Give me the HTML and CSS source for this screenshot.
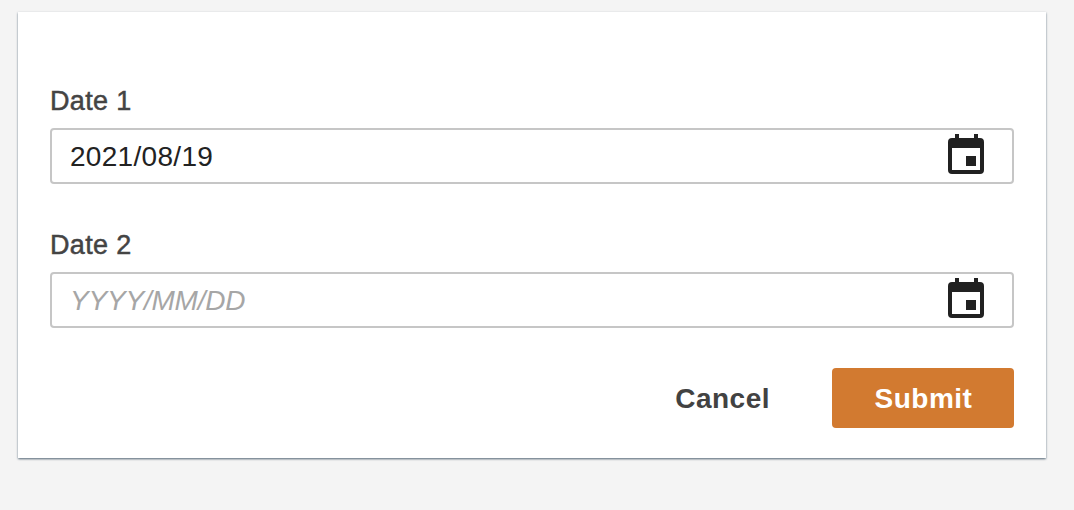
FILE: index.html
```html
<!DOCTYPE html>
<html lang="en">
  <head>
    <meta charset="UTF-8" />
    <title>Date form</title>
    <link rel="stylesheet" href="styles.css">
  </head>

  <body>
    <form class="card">
      <div class="form-group">
        <label for="date1">Date 1</label>
        <div class="date-input">
          <input type="text" id="date1" value="2021/08/19" placeholder="YYYY/MM/DD" />
          <svg class="cal-icon" viewBox="0 0 36 40" aria-hidden="true">
            <path fill="#212121" fill-rule="evenodd" d="M7 0h4v4h15V0h4v4h2a4 4 0 0 1 4 4v28a4 4 0 0 1-4 4H4a4 4 0 0 1-4-4V8a4 4 0 0 1 4-4h3zM4 14v22h28V14z" />
            <rect x="18" y="22" width="10" height="10" fill="#212121" />
          </svg>
        </div>
      </div>
      <div class="form-group">
        <label for="date2">Date 2</label>
        <div class="date-input">
          <input type="text" id="date2" placeholder="YYYY/MM/DD" />
          <svg class="cal-icon" viewBox="0 0 36 40" aria-hidden="true">
            <path fill="#212121" fill-rule="evenodd" d="M7 0h4v4h15V0h4v4h2a4 4 0 0 1 4 4v28a4 4 0 0 1-4 4H4a4 4 0 0 1-4-4V8a4 4 0 0 1 4-4h3zM4 14v22h28V14z" />
            <rect x="18" y="22" width="10" height="10" fill="#212121" />
          </svg>
        </div>
      </div>
      <div class="actions">
        <button type="button" class="btn-cancel">Cancel</button>
        <button type="button" class="btn-submit">Submit</button>
      </div>
    </form>
  </body>
</html>
```

FILE: styles.css
```css
html,
body {
  height: 100%;
}

body {
  margin: 0;
  box-sizing: border-box;
  padding: 12px 28px 0 18px;
  background-color: #f4f4f4;
  font-family: "Liberation Sans", Arial, sans-serif;
}

.card {
  height: 446px;
  box-sizing: border-box;
  padding: 72px 32px 0;
  background-color: #fff;
  box-shadow: 0 1px 2px rgba(60, 85, 105, 0.75), 0 2px 2px -1px rgba(0, 0, 0, 0.2);
}

.form-group {
  margin-bottom: 44px;
}

label {
  display: block;
  margin-bottom: 10px;
  height: 34px;
  line-height: 34px;
  font-size: 27px;
  letter-spacing: 0.35px;
  color: #444;
  -webkit-text-stroke: 0.5px #444;
}

.date-input {
  display: flex;
  align-items: center;
  height: 56px;
  box-sizing: border-box;
  padding: 0 28px 0 18px;
  border: 2px solid #c6c6c6;
  border-radius: 4px;
}

input {
  flex: 1;
  min-width: 0;
  padding: 2px 0 0;
  border: none;
  outline: none;
  font-family: inherit;
  font-size: 28px;
  letter-spacing: 0.3px;
  color: #222;
}

input::placeholder {
  font-style: italic;
  letter-spacing: -0.2px;
  color: #a6a6a6;
  opacity: 1;
}

.cal-icon {
  width: 36px;
  height: 40px;
  margin-top: -4px;
}

.actions {
  display: flex;
  justify-content: flex-end;
  align-items: center;
  gap: 62px;
  margin-top: -4px;
}

button {
  border: none;
  padding: 2px 0 0;
  background: none;
  font-family: inherit;
  font-size: 28px;
  font-weight: 700;
  letter-spacing: 0.5px;
  cursor: pointer;
}

.btn-cancel {
  color: #424242;
}

.btn-submit {
  width: 182px;
  height: 60px;
  padding-left: 1px;
  border-radius: 4px;
  background-color: #d27a30;
  color: #fff;
}
```
